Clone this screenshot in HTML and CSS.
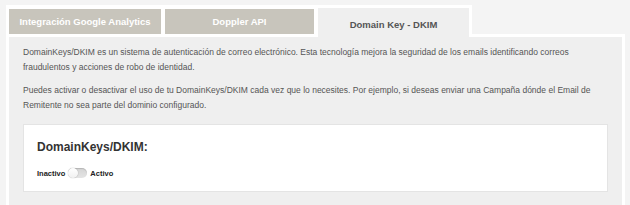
FILE: index.html
```html
<!DOCTYPE html>
<html lang="es">
<head>
<meta charset="utf-8">
<title>Domain Key - DKIM</title>
<link rel="stylesheet" href="styles.css">
</head>
<body>
<div class="tabs-wrap">
  <ul class="tabs">
    <li class="tab tab-1">Integración Google Analytics</li>
    <li class="tab tab-2">Doppler API</li>
    <li class="tab tab-active">Domain Key - DKIM</li>
  </ul>
  <div class="panel">
    <p class="text">DomainKeys/DKIM es un sistema de autenticación de correo electrónico. Esta tecnología mejora la seguridad de los emails identificando correos fraudulentos y acciones de robo de identidad.</p>
    <p class="text">Puedes activar o desactivar el uso de tu DomainKeys/DKIM cada vez que lo necesites. Por ejemplo, si deseas enviar una Campaña dónde el Email de Remitente no sea parte del dominio configurado.</p>
    <div class="card">
      <h2 class="card-title">DomainKeys/DKIM:</h2>
      <div class="switch-row">
        <span class="switch-label">Inactivo</span>
        <span class="switch"><span class="knob"></span></span>
        <span class="switch-label">Activo</span>
      </div>
    </div>
  </div>
</div>
</body>
</html>
```

FILE: styles.css
```css
html, body {
  margin: 0;
  background: #f4f4f4;
}
body {
  padding: 5px 5px 0 6px;
  font-family: "Liberation Sans", Arial, sans-serif;
}
.tabs-wrap {
  display: flex;
  flex-direction: column;
  align-items: flex-start;
}
.tabs {
  display: flex;
  align-items: flex-end;
  gap: 4px;
  list-style: none;
  margin: 0;
  padding: 3px 3px 0 3px;
  background: #ffffff;
}
.tab {
  height: 25px;
  display: flex;
  align-items: center;
  justify-content: center;
  background: #c8c5bc;
  color: #ffffff;
  font-weight: bold;
  font-size: 9.5px;
}
.tab-1 { width: 152px; }
.tab-2 { width: 149px; }
.tab-active {
  width: 151px;
  height: 29px;
  margin-bottom: -3px;
  padding-top: 3px;
  box-sizing: border-box;
  background: #efefef;
  color: #555555;
  position: relative;
  z-index: 1;
}
.panel {
  align-self: stretch;
  background: #efefef;
  border: 3px solid #ffffff;
  padding: 8px 14px 20px 14px;
}
.text {
  margin: 0 0 8px 0;
  font-size: 8.5px;
  line-height: 15px;
  color: #555555;
}
.card {
  margin-top: 11px;
  background: #ffffff;
  border: 1px solid #e4e4e4;
  padding: 13px 14px 12px 13px;
}
.card-title {
  margin: 0 0 11px 0;
  font-size: 12px;
  line-height: 18px;
  font-weight: bold;
  color: #333333;
}
.switch-row {
  display: flex;
  align-items: center;
  gap: 3px;
  height: 12px;
}
.switch-label {
  font-size: 7.5px;
  font-weight: bold;
  color: #222222;
}
.switch {
  width: 19px;
  height: 10px;
  border-radius: 5px;
  background: linear-gradient(#d4d4d4, #e4e4e4);
  box-shadow: inset 0 1px 1px rgba(0,0,0,0.15);
  display: flex;
  align-items: center;
}
.knob {
  width: 10px;
  height: 10px;
  border-radius: 50%;
  background: linear-gradient(#ffffff, #f0f0f0);
  box-shadow: 0 0 1px rgba(0,0,0,0.45);
}
```
